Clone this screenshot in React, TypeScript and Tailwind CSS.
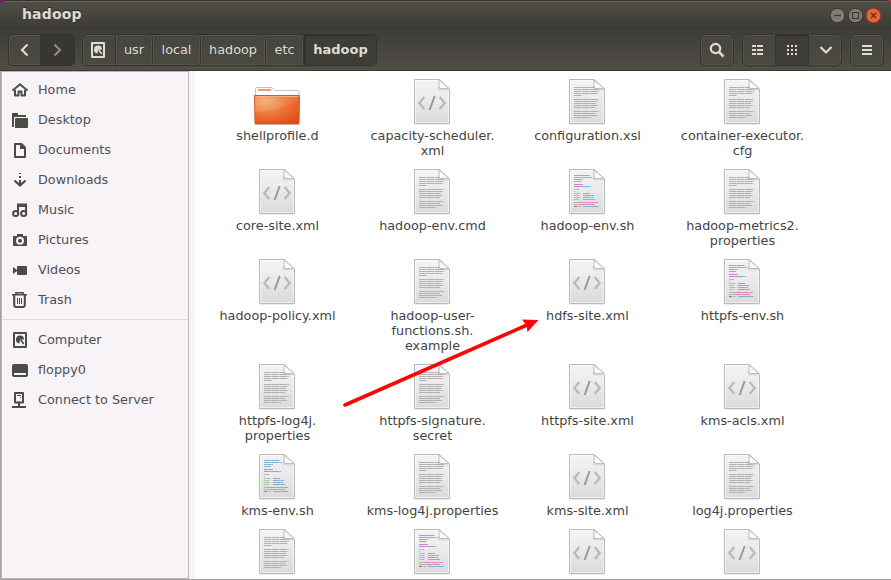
import React from 'react';

type Kind = 'folder' | 'code' | 'text' | 'script';

const files: { kind: Kind; lines: string[] }[] = [
  { kind: 'folder', lines: ['shellprofile.d'] },
  { kind: 'code', lines: ['capacity-scheduler.', 'xml'] },
  { kind: 'text', lines: ['configuration.xsl'] },
  { kind: 'text', lines: ['container-executor.', 'cfg'] },
  { kind: 'code', lines: ['core-site.xml'] },
  { kind: 'text', lines: ['hadoop-env.cmd'] },
  { kind: 'script', lines: ['hadoop-env.sh'] },
  { kind: 'text', lines: ['hadoop-metrics2.', 'properties'] },
  { kind: 'code', lines: ['hadoop-policy.xml'] },
  { kind: 'text', lines: ['hadoop-user-', 'functions.sh.', 'example'] },
  { kind: 'code', lines: ['hdfs-site.xml'] },
  { kind: 'script', lines: ['httpfs-env.sh'] },
  { kind: 'text', lines: ['httpfs-log4j.', 'properties'] },
  { kind: 'text', lines: ['httpfs-signature.', 'secret'] },
  { kind: 'code', lines: ['httpfs-site.xml'] },
  { kind: 'code', lines: ['kms-acls.xml'] },
  { kind: 'script', lines: ['kms-env.sh'] },
  { kind: 'text', lines: ['kms-log4j.properties'] },
  { kind: 'code', lines: ['kms-site.xml'] },
  { kind: 'text', lines: ['log4j.properties'] },
  { kind: 'text', lines: [] },
  { kind: 'script', lines: [] },
  { kind: 'code', lines: [] },
  { kind: 'code', lines: [] },
];

const textRows = [
  [8, 25], [10, 25], [12, 25], [14, 24], [16, 8],
  [20, 25], [22, 24], [24, 22], [26, 24], [28, 21],
  [32, 25], [34, 21], [36, 23], [38, 17],
];

const B = '#86b0cc';
const P = '#b583d8';
const K = '#df87b8';
const G = '#9cd693';
const N = '#b4b4b4';
const R = '#e25858';

// x, y, width, colour
const scriptRows: [number, number, number, string][] = [
  [5, 6, 16, B], [5, 8, 18, B], [5, 10, 9, B], [5, 12, 7, B],
  [5, 15, 4, P], [9, 15, 5, K], [5, 17, 4, P], [9, 17, 4, K], [13, 17, 9, B],
  [5, 20, 3, G], [8, 20, 2, N], [5, 22, 1, G],
  [5, 24, 3, G], [8, 24, 3, N], [14, 24, 7, B],
  [5, 26, 3, G], [8, 26, 2, N], [14, 26, 11, B],
  [5, 28, 3, G], [8, 28, 3, N], [14, 28, 10, B],
  [5, 30, 3, G], [8, 30, 2, N], [14, 30, 12, B],
  [5, 33, 5, N], [10, 33, 19, K], [5, 35, 6, N], [11, 35, 15, K],
  [5, 37, 3, R], [9, 37, 3, N], [14, 37, 16, B],
];

function PageIcon({ kind }: { kind: Kind }) {
  return (
    <svg width="36" height="47" viewBox="0 0 36 47" className="block">
      <rect x="1" y="45" width="34" height="1" fill="#000" opacity=".08" />
      <path d="M.5.5h25l10 9.5v34.5H.5z" fill="url(#page)" stroke="#b9b9b9" />
      <path d="M1.5 1.5h23.5l9.5 9v33h-33z" fill="none" stroke="#fff" opacity=".55" />
      {kind === 'text' &&
        textRows.map(([y, w]) => (
          <path key={y} d={`M5 ${y + 0.5}h${w}`} stroke="#b2b1b1" strokeDasharray="7.6 .4" />
        ))}
      {kind === 'script' &&
        scriptRows.map(([x, y, w, c], i) => (
          <path key={i} d={`M${x} ${y + 0.5}h${w}`} stroke={c} strokeDasharray="7.6 .4" />
        ))}
      {kind === 'code' && (
        <g fill="none" strokeWidth="2.3">
          <path d="M10.300 18L5.300 24l5 6M25.700 18l5 6-5 6" stroke="#bababa" />
          <path d="M15.600 31L20.700 17" stroke="#999" strokeWidth="2" />
        </g>
      )}
      <path d="M24 7v4.500h11v-2z" fill="url(#foldShade)" />
      <path d="M25 1v6.500q0 2 2 2h8z" fill="#fcfcfc" stroke="#b9b9b9" strokeWidth=".9" />
    </svg>
  );
}

function FolderIcon() {
  return (
    <svg width="48" height="47" viewBox="0 0 48 47" className="block">
      <path d="M1 45.5h46" stroke="#000" opacity=".15" />
      <path d="M2.500 20V9.500q0-1 1-1h15.500l2.500 3H45q1 0 1 1V20z" fill="#fff" stroke="#c3c3c3" />
      <path d="M5 10h13v2H5z" fill="#f0a070" />
      <path d="M1.500 16.500h45l-.5 27.500q0 .5-.5.5h-43q-.5 0-.5-.5z" fill="url(#folder)" stroke="#d4582c" />
      <path d="M2 17h44v4.500Q28 31 2 33z" fill="#fff" opacity=".07" />
      <path d="M2.500 17.500h43" stroke="#f5b184" />
      <path d="M2 45h44" stroke="#b8431e" opacity=".5" />
    </svg>
  );
}

function Defs() {
  return (
    <svg width="0" height="0" className="absolute">
      <defs>
        <linearGradient id="page" x1="0" y1="0" x2="0" y2="1">
          <stop offset="0" stopColor="#f5f3f5" />
          <stop offset=".45" stopColor="#ebeaeb" />
          <stop offset="1" stopColor="#dadada" />
        </linearGradient>
        <linearGradient id="foldShade" x1="0" y1="0" x2="0" y2="1">
          <stop offset="0" stopColor="#999" stopOpacity=".6" />
          <stop offset="1" stopColor="#aaa" stopOpacity=".2" />
        </linearGradient>
        <radialGradient id="folder" cx=".25" cy=".2" r=".95">
          <stop offset="0" stopColor="#f6b070" />
          <stop offset=".5" stopColor="#ed763a" />
          <stop offset="1" stopColor="#e54b16" />
        </radialGradient>
      </defs>
    </svg>
  );
}

function Disk() {
  return (
    <>
      <path d="M2 1h12v14H2z" fill="none" stroke="currentColor" strokeWidth="2" strokeLinejoin="round" />
      <path d="M8 7.500h4a4 4 0 1 0-4.500 4z" fill="currentColor" />
      <path d="M8.500 7.500l3.300 4.500" stroke="currentColor" strokeWidth="1.500" />
    </>
  );
}

const places: { label: string; icon: React.ReactNode }[] = [
  {
    label: 'Home',
    icon: (
      <>
        <path d="M.6 8.600L8 2.300l7.400 6.300" fill="none" stroke="currentColor" strokeWidth="2" />
        <path d="M3 8v5.500h3.500V9.500h3v4H13V8" fill="none" stroke="currentColor" strokeWidth="2" strokeLinejoin="round" />
      </>
    ),
  },
  {
    label: 'Desktop',
    icon: (
      <>
        <path d="M0 1h6v2h8v2H2v10H0z" fill="currentColor" />
        <path d="M4 6h11q1 0 1 1v8q0 1-1 1H3V7q0-1 1-1z" fill="currentColor" />
      </>
    ),
  },
  {
    label: 'Documents',
    icon: (
      <>
        <path d="M3 2h6.500L13 5.500V15H3z" fill="none" stroke="currentColor" strokeWidth="2" strokeLinejoin="round" />
        <path d="M8 2v5h5V5L10 2z" fill="currentColor" />
      </>
    ),
  },
  {
    label: 'Downloads',
    icon: (
      <>
        <path d="M7 1h2v1H7zM7 4h2v2H7zM7 8h2v5H7z" fill="currentColor" />
        <path d="M2.500 8.500L8 13.500l5.500-5" fill="none" stroke="currentColor" strokeWidth="2.200" />
      </>
    ),
  },
  {
    label: 'Music',
    icon: (
      <>
        <path d="M6 12V2.500h8V11M6 4h8" fill="none" stroke="currentColor" strokeWidth="2" />
        <circle cx="3.700" cy="11.500" r="2.600" fill="none" stroke="currentColor" strokeWidth="2" />
        <circle cx="11.700" cy="11.500" r="2.600" fill="none" stroke="currentColor" strokeWidth="2" />
      </>
    ),
  },
  {
    label: 'Pictures',
    icon: (
      <>
        <path
          d="M5 2h6v2h3q1 0 1 1v8q0 1-1 1H2q-1 0-1-1V5q0-1 1-1h3zM8 4.800a4 4 0 1 0 0 8 4 4 0 0 0 0-8z"
          fill="currentColor"
          fillRule="evenodd"
        />
        <circle cx="8" cy="8.800" r="2" fill="currentColor" />
      </>
    ),
  },
  {
    label: 'Videos',
    icon: <path d="M1 5l4 3v1l-4 3zM6 4h8q1 0 1 1v7q0 1-1 1H6q-1 0-1-1V5q0-1 1-1z" fill="currentColor" />,
  },
  {
    label: 'Trash',
    icon: (
      <>
        <path d="M0 2.800h15M4 2V.8h7V2" fill="none" stroke="currentColor" strokeWidth="1.600" />
        <path d="M2.200 3v10q0 2 2 2h6.600q2 0 2-2V3" fill="none" stroke="currentColor" strokeWidth="2.100" />
        <path d="M5.500 6v6M7.500 6v6M9.500 6v6" stroke="currentColor" strokeWidth="1" />
      </>
    ),
  },
];

const devices: { label: string; icon: React.ReactNode }[] = [
  { label: 'Computer', icon: <Disk /> },
  {
    label: 'floppy0',
    icon: (
      <path
        d="M2 2h12q2 0 2 2v9q0 2-2 2H2q-2 0-2-2V4q0-2 2-2zM2 11v2h12v-2z"
        fill="currentColor"
        fillRule="evenodd"
      />
    ),
  },
  {
    label: 'Connect to Server',
    icon: (
      <>
        <path d="M3 1h8v9.500H3z" fill="none" stroke="currentColor" strokeWidth="2" strokeLinejoin="round" />
        <path d="M5 3h4v1H5zM8 5h1v1H8zM6 11h2v3H6zM0 14h14v2H0z" fill="currentColor" />
      </>
    ),
  },
];

function Place({ label, icon }: { label: string; icon: React.ReactNode }) {
  return (
    <li className="flex h-[30px] items-center gap-[10px] pl-[10px]">
      <svg width="16" height="16" viewBox="0 0 16 16" className="text-[#4a4c46]">
        {icon}
      </svg>
      <span className="-mt-[2px] leading-[15px]">{label}</span>
    </li>
  );
}

const button =
  'flex h-[32px] items-center justify-center rounded-[5px] border border-[#33332f] bg-linear-to-b from-[#45443e] to-[#4b4a42] shadow-[inset_0_0_0_1px_#55544c]';
const crumb =
  'flex h-full items-center justify-center border-r border-[#33332f] pb-px shadow-[inset_0_0_0_1px_#55544c]';

export default function App() {
  return (
    <div className="relative flex h-[580px] w-[891px] flex-col overflow-hidden bg-linear-to-r from-[#762572] to-[#c0304a] text-[12.8px] text-[#444444] [font-family:'DejaVu_Sans',sans-serif]">
      <Defs />
      <header className="h-[71px] shrink-0 rounded-t-[6px] border-b border-[#3a3831] bg-[#3c3b37] text-[#dfdbd2]">
        <div className="flex h-[30px] items-center justify-between rounded-t-[6px] border-t border-[#34332e] bg-linear-to-b from-[#504f47] to-[#3a3934] pr-[9px] pl-[22px] shadow-[inset_0_1px_0_#66645b]">
          <h1 className="-mt-[2px] text-[14px] font-bold tracking-[.15px] [text-shadow:0_-1px_0_#2a2925]">hadoop</h1>
          <div className="flex gap-[2px]">
            {['min', 'max', 'close'].map((k) => (
              <svg key={k} width="16" height="16" viewBox="0 0 16 16">
                <circle
                  cx="7.500"
                  cy="7.500"
                  r="7.300"
                  fill={k === 'close' ? '#ef6130' : '#7d7b72'}
                  stroke={k === 'close' ? '#8a3c22' : '#33322d'}
                />
                <path
                  d={k === 'min' ? 'M4 7.500h7' : k === 'max' ? 'M4.500 4.500h6v6h-6z' : 'M5 5l5 5m0-5l-5 5'}
                  fill="none"
                  stroke="#3a3934"
                  strokeWidth="1.200"
                />
              </svg>
            ))}
          </div>
        </div>
        <div className="flex h-10 items-start bg-linear-to-b from-[#3e3d38] to-[#504e46] pt-1 pr-[7px] pl-2">
          <div className={`${button} w-[67px] overflow-hidden`}>
            <div className="flex h-full flex-1 items-center justify-center">
              <svg width="16" height="16" viewBox="0 0 16 16">
                <path d="M10.500 2.500L5 8l5.500 5.500" fill="none" stroke="#dfdbd2" strokeWidth="2.200" />
              </svg>
            </div>
            <div className="flex h-full w-[34px] items-center justify-center bg-[#373631]">
              <svg width="16" height="16" viewBox="0 0 16 16">
                <path d="M5.500 2.500L11 8l-5.500 5.500" fill="none" stroke="#8e8b82" strokeWidth="2.200" />
              </svg>
            </div>
          </div>
          <nav className={`${button} ml-[7px] w-[295px] overflow-hidden`}>
            <div className="flex h-full w-[33px] items-center justify-center border-r border-[#33332f] pr-[2px]">
              <svg width="16" height="16" viewBox="0 0 16 16">
                <Disk />
              </svg>
            </div>
            <div className={`${crumb} w-[37px] rounded-r-[4px]`}>usr</div>
            <div className={`${crumb} w-[48px] rounded-r-[4px]`}>local</div>
            <div className={`${crumb} w-[65px] rounded-r-[4px]`}>hadoop</div>
            <div className={`${crumb} w-[38px] rounded-r-[4px]`}>etc</div>
            <div className="flex h-full flex-1 items-center justify-center border-l border-[#302f2b] bg-[#3e3d38] pb-px text-[13px] font-bold shadow-[inset_0_1px_1px_#302f2b]">
              hadoop
            </div>
          </nav>
          <div className="flex-1" />
          <div className={`${button} w-[34px]`}>
            <svg width="16" height="16" viewBox="0 0 16 16" fill="none" stroke="#dfdbd2">
              <circle cx="6.500" cy="6.500" r="4.700" strokeWidth="2.200" />
              <path d="M10 10l4.500 4.500" strokeWidth="2.500" />
            </svg>
          </div>
          <div className={`${button} ml-2 w-[100px]`}>
            <div className="flex h-full flex-1 items-center justify-center pr-[2px]">
              <svg width="12" height="10" viewBox="0 0 12 10" fill="#dfdbd2" shapeRendering="crispEdges">
                <path d="M0 0h4v2H0zM5 0h6v2H5zM0 4h4v2H0zM5 4h6v2H5zM0 8h4v2H0zM5 8h6v2H5z" />
              </svg>
            </div>
            <div className="flex h-full w-[34px] items-center justify-center border-r border-l border-[#33332f] bg-[#3e3d38] shadow-[inset_0_1px_1px_#302f2b]">
              <svg width="10" height="10" viewBox="0 0 10 10" fill="#dfdbd2" shapeRendering="crispEdges">
                <path d="M0 0h2v2H0zM4 0h2v2H4zM8 0h2v2H8zM0 4h2v2H0zM4 4h2v2H4zM8 4h2v2H8zM0 8h2v2H0zM4 8h2v2H4zM8 8h2v2H8z" />
              </svg>
            </div>
            <div className="flex h-full w-[32px] items-center justify-center pl-[2px]">
              <svg width="14" height="10" viewBox="0 0 14 10">
                <path d="M1.500 2L7 7.500 12.500 2" fill="none" stroke="#dfdbd2" strokeWidth="2.200" />
              </svg>
            </div>
          </div>
          <div className={`${button} ml-2 w-[34px]`}>
            <svg width="10" height="10" viewBox="0 0 10 10" fill="#dfdbd2" shapeRendering="crispEdges">
              <path d="M0 0h10v2H0zM0 4h10v2H0zM0 8h10v2H0z" />
            </svg>
          </div>
        </div>
      </header>
      <main className="flex min-h-0 flex-1 border-b border-l border-[#a5a19f] bg-white">
        <aside className="w-[188px] shrink-0 border border-[#b9b5b6] bg-[#f7f3f7] pt-[3px] text-[#505050]">
          <ul>
            {places.map((p) => (
              <Place key={p.label} {...p} />
            ))}
          </ul>
          <hr className="mt-[4px] mb-[5px] border-t border-[#dedade]" />
          <ul>
            {devices.map((p) => (
              <Place key={p.label} {...p} />
            ))}
          </ul>
        </aside>
        <div className="w-[6px] shrink-0 bg-[#f7f3f7]" />
        <section className="grid grid-cols-[repeat(4,155px)] content-start overflow-hidden pt-2 pl-[5px]">
          {files.map((f, i) => (
            <div key={i} className="flex flex-col items-center pb-[11px]">
              <div className="mr-px h-[49px]">
                {f.kind === 'folder' ? <FolderIcon /> : <PageIcon kind={f.kind} />}
              </div>
              <div className="text-center leading-[15px] whitespace-nowrap">
                {f.lines.map((l) => (
                  <div key={l}>{l}</div>
                ))}
              </div>
            </div>
          ))}
        </section>
      </main>
      <svg width="891" height="580" className="pointer-events-none absolute inset-0">
        <path d="M345 405L527 325" stroke="#fb0606" strokeWidth="3.600" strokeLinecap="round" />
        <path d="M538.500 320L522 319.500 526.500 325.500 527.500 332z" fill="#fb0606" />
      </svg>
    </div>
  );
}
